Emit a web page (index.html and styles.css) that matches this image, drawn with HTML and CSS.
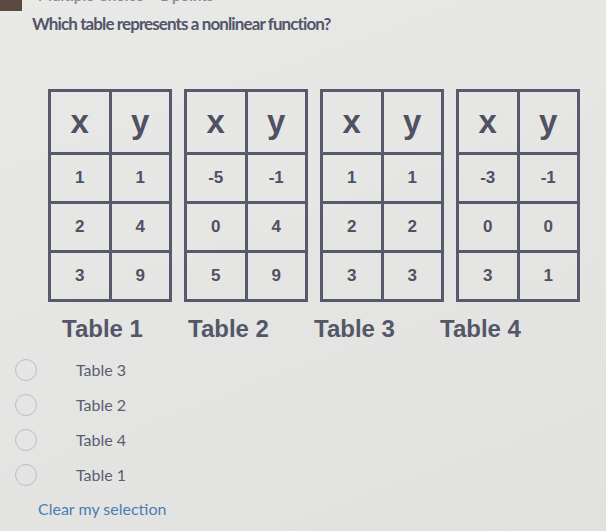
FILE: index.html
```html
<!DOCTYPE html>
<html lang="en">
<head>
<meta charset="utf-8">
<title>Nonlinear function question</title>
<link rel="stylesheet" href="styles.css">
</head>
<body>
<div class="page">
  <div class="topbar">
    <span class="tab"></span>
    <span class="meta">Multiple Choice</span>
    <span class="meta">1 points</span>
  </div>
  <h1 class="question">Which table represents a nonlinear function?</h1>

  <div class="tables">
    <table class="xy">
      <tr class="head"><th>x</th><th>y</th></tr>
      <tr><td>1</td><td>1</td></tr>
      <tr><td>2</td><td>4</td></tr>
      <tr><td>3</td><td>9</td></tr>
    </table>
    <table class="xy">
      <tr class="head"><th>x</th><th>y</th></tr>
      <tr><td>-5</td><td>-1</td></tr>
      <tr><td>0</td><td>4</td></tr>
      <tr><td>5</td><td>9</td></tr>
    </table>
    <table class="xy">
      <tr class="head"><th>x</th><th>y</th></tr>
      <tr><td>1</td><td>1</td></tr>
      <tr><td>2</td><td>2</td></tr>
      <tr><td>3</td><td>3</td></tr>
    </table>
    <table class="xy">
      <tr class="head"><th>x</th><th>y</th></tr>
      <tr><td>-3</td><td>-1</td></tr>
      <tr><td>0</td><td>0</td></tr>
      <tr><td>3</td><td>1</td></tr>
    </table>
  </div>

  <div class="labels">
    <span class="label">Table 1</span>
    <span class="label">Table 2</span>
    <span class="label">Table 3</span>
    <span class="label">Table 4</span>
  </div>

  <ul class="options">
    <li class="option"><span class="radio"></span><span class="opt-text">Table 3</span></li>
    <li class="option"><span class="radio"></span><span class="opt-text">Table 2</span></li>
    <li class="option"><span class="radio"></span><span class="opt-text">Table 4</span></li>
    <li class="option"><span class="radio"></span><span class="opt-text">Table 1</span></li>
  </ul>

  <a class="clear" href="#">Clear my selection</a>
</div>
</body>
</html>
```
FILE: styles.css
```css
html, body {
  margin: 0;
  padding: 0;
}
body {
  background: linear-gradient(160deg, #e9e9e8 0%, #e5e5e4 50%, #e1e2e0 100%);
  font-family: Lato, "Noto Sans", sans-serif;
  width: 606px;
  height: 531px;
  overflow: hidden;
}
.page {
  display: flex;
  flex-direction: column;
  align-items: flex-start;
}
.topbar {
  display: flex;
  align-items: flex-start;
  height: 11px;
  overflow: hidden;
  width: 100%;
}
.tab {
  width: 22px;
  height: 11px;
  background: #5b4a40;
}
.meta {
  font-size: 15px;
  line-height: 16px;
  margin-top: -13px;
  color: #8a8d95;
  margin-left: 16px;
  font-weight: 700;
}
.question {
  margin: 3px 0 0 32px;
  font-size: 17px;
  line-height: 20px;
  font-weight: 700;
  color: #535667;
  letter-spacing: -0.9px;
}
.tables {
  display: flex;
  gap: 12px;
  margin: 55px 0 0 48px;
}
.xy {
  border-collapse: collapse;
  border: 3px solid #565a6a;
  width: 124px;
  font-family: "Liberation Sans", Arial, sans-serif;
  font-weight: 700;
  color: #4e5262;
  text-align: center;
}
.xy th, .xy td {
  border: 3px solid #565a6a;
  padding: 0;
  width: 50%;
}
.xy th {
  height: 60px;
  font-size: 33px;
  line-height: 32px;
}
.xy td {
  height: 46px;
  font-size: 17px;
}
.labels {
  display: flex;
  margin: 13px 0 0 62px;
}
.label {
  width: 126px;
  font-family: "Liberation Sans", Arial, sans-serif;
  font-weight: 700;
  font-size: 24px;
  line-height: 28px;
  color: #535767;
}
.options {
  list-style: none;
  margin: 9px 0 0 0;
  padding: 0;
}
.option {
  display: flex;
  align-items: center;
  height: 35px;
}
.radio {
  width: 20px;
  height: 20px;
  border: 1.5px solid #babec6;
  border-radius: 50%;
  margin-left: 15px;
  flex: none;
}
.opt-text {
  margin-left: 39px;
  font-size: 16px;
  color: #5a5e6e;
}
.clear {
  margin: 7px 0 0 38px;
  font-size: 16px;
  line-height: 20px;
  color: #4a7db5;
  text-decoration: none;
}
```
